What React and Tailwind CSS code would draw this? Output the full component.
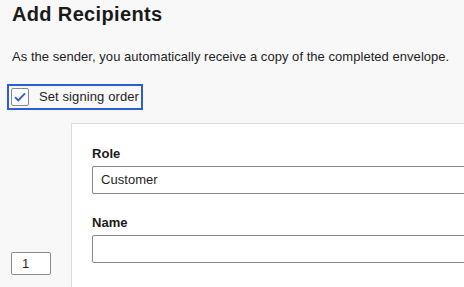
import React from "react";

const Field = ({ label, value, className = "" }) => (
  <div className={className}>
    <label className="block text-[13px] font-bold leading-[18px] text-[#1a1a1a] mb-[3px]">
      {label}
    </label>
    <div className="h-[28px] border border-[#8a8a8a] rounded-[2px] bg-white pl-[8px] flex items-center text-[13px] leading-[18px] text-[#1f1f1f]">
      {value}
    </div>
  </div>
);

const App = () => {
  return (
    <div
      className="h-[287px] w-[464px] overflow-hidden bg-[#f8f8f8] pl-[12px] text-[#1f1f1f] tracking-[0.04px]"
      style={{ fontFamily: '"Liberation Sans", Arial, sans-serif' }}
    >
      <h1 className="text-[20px] font-bold leading-[28px] tracking-[0.35px] text-[#1a1a1a]">
        Add Recipients
      </h1>
      <p className="mt-5 text-[13px] leading-[18px] whitespace-nowrap">
        As the sender, you automatically receive a copy of the completed envelope.
      </p>

      {/* signing order toggle, shown focused */}
      <div className="mt-[18px] -ml-[5px] inline-flex items-center gap-[10px] border-2 border-[#2d5fd3] p-[2px] pr-[2px]">
        <span className="w-[18px] h-[18px] border border-[#8a8a8a] rounded-[2px] bg-white flex items-center justify-center">
          <svg width="12" height="10" viewBox="0 0 12 10" fill="none">
            <path d="M1 5.2 L4.3 8.4 L11 1.4" stroke="#2d5fd3" strokeWidth="1.8" />
          </svg>
        </span>
        <span className="text-[13px] leading-[18px] tracking-[0.1px]">Set signing order</span>
      </div>

      <div className="mt-[13px] flex">
        <div className="w-[60px] shrink-0 -ml-[1px] pt-[129px]">
          <div className="w-[40px] h-[23px] border border-[#8a8a8a] rounded-[2px] bg-white pl-[10px] flex items-center text-[13px] leading-[18px]">
            1
          </div>
        </div>
        <div className="w-[520px] shrink-0 h-[200px] bg-white border border-[#dcdcdc] pl-[20px] pt-[21px]">
          <Field label="Role" value="Customer" />
          <Field label="Name" value="" className="mt-5" />
        </div>
      </div>
    </div>
  );
};

export default App;
